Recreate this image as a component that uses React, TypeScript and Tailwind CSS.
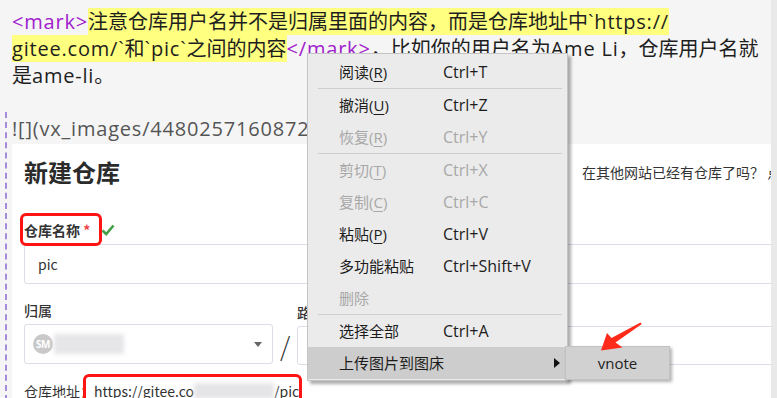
import React from "react";

const F = "font-['Open_Sans','Noto_Sans_CJK_SC',sans-serif]";

type Item = {
  label: React.ReactNode;
  sc?: string;
  dis?: boolean;
  sep?: boolean;
  hl?: boolean;
  arrow?: boolean;
};

function Acc({ t, k }: { t: string; k: string }) {
  return (
    <span>
      {t}(<span className="underline underline-offset-[3px]">{k}</span>)
    </span>
  );
}

function L({ children, className = "" }: { children: React.ReactNode; className?: string }) {
  return <span className={`tracking-[0.8px] ${className}`}>{children}</span>;
}

const items: Item[] = [
  { label: <Acc t="阅读" k="R" />, sc: "Ctrl+T" },
  { sep: true, label: null },
  { label: <Acc t="撤消" k="U" />, sc: "Ctrl+Z" },
  { label: <Acc t="恢复" k="R" />, sc: "Ctrl+Y", dis: true },
  { sep: true, label: null },
  { label: <Acc t="剪切" k="T" />, sc: "Ctrl+X", dis: true },
  { label: <Acc t="复制" k="C" />, sc: "Ctrl+C", dis: true },
  { label: <Acc t="粘贴" k="P" />, sc: "Ctrl+V" },
  { label: "多功能粘贴", sc: "Ctrl+Shift+V" },
  { label: "删除", dis: true },
  { sep: true, label: null },
  { label: "选择全部", sc: "Ctrl+A" },
  { label: "上传图片到图床", hl: true, arrow: true },
];

function ContextMenu() {
  return (
    <div
      className={`absolute left-[307px] top-[53px] w-[261px] h-[328px] bg-[#ebebeb] border border-[#c4c4c4] shadow-[3px_3px_3px_rgba(0,0,0,0.32)] pt-[2px] text-[15px] ${F}`}
    >
      {items.map((it, i) =>
        it.sep ? (
          <div key={i} className="h-px bg-[#cfcfcf] ml-[10px] mr-[5px]" />
        ) : (
          <div
            key={i}
            className={`h-[32px] flex items-center pl-[31px] ${it.hl ? "bg-[#cdcdcd]" : ""} ${
              it.dis ? "text-[#a8a8a8]" : "text-[#1c1c1c]"
            }`}
          >
            <span className="w-[104px] shrink-0 whitespace-nowrap">{it.label}</span>
            {it.sc && <span className="whitespace-nowrap text-[16px]">{it.sc}</span>}
            {it.arrow && (
              <svg className="ml-auto mr-[7px]" width="6" height="10" viewBox="0 0 6 10">
                <path d="M0 0 L6 5 L0 10 Z" fill="#111" />
              </svg>
            )}
          </div>
        )
      )}
    </div>
  );
}

function GiteeShot() {
  return (
    <div className="mt-[2px] bg-white flex-1 overflow-hidden text-[#333] font-['Noto_Sans_CJK_SC','Open_Sans',sans-serif]">
      <div className="w-[900px] pl-[12px] pt-[12px]">
        {/* title row */}
        <div className="flex items-center h-[32px]">
          <div className="w-[558px] text-[24px] font-bold leading-[32px] text-[#2b2b2b]">新建仓库</div>
          <div className="text-[14px] leading-[20px] whitespace-nowrap">在其他网站已经有仓库了吗？ 点此导入</div>
        </div>

        {/* repo name label */}
        <div className="mt-[32px] h-[20px] flex items-center text-[14px] leading-[20px]">
          <span className="relative font-bold">
            仓库名称 <span className="text-[#e44]">*</span>
            <span className="absolute -left-[4px] -top-[7px] w-[82px] h-[33px] border-[3px] border-[#ff1414] rounded-[6px]" />
          </span>
          <svg className="ml-[11px]" width="14" height="12" viewBox="0 0 14 12">
            <path d="M1.5 6.5 L5.2 10 L12.5 1.5" fill="none" stroke="#43a047" strokeWidth="2.6" />
          </svg>
        </div>
        <div className="mt-[4px] h-[40px] border border-[#dcdde6] rounded-[3px] flex items-center pl-[13px] text-[14px]">
          pic
        </div>

        {/* owner / path */}
        <div className="mt-[16px] flex items-start">
          <div className="w-[249px]">
            <div className="h-[20px] text-[14px] leading-[20px] font-medium">归属</div>
            <div className="mt-[4px] h-[40px] border border-[#dcdde6] rounded-[3px] flex items-center pl-[8px] pr-[10px]">
              <div className="w-[20px] h-[20px] rounded-full bg-[#c9c9c9] text-white text-[10px] font-bold tracking-[-0.5px] flex items-center justify-center font-['Open_Sans',sans-serif]">
                SM
              </div>
              <div className="ml-[1px] w-[70px] h-[20px] bg-[#e6e6e9] blur-[2px]" />
              <svg className="ml-auto" width="8" height="5" viewBox="0 0 8 5">
                <path d="M0 0 L8 0 L4 5 Z" fill="#666" />
              </svg>
            </div>
          </div>
          <div className="w-[24px] mt-[24px] h-[40px] flex items-center justify-center text-[26px] font-light text-[#333]">
            /
          </div>
          <div className="flex-1 mt-[2px]">
            <div className="h-[20px] text-[14px] leading-[20px] font-medium">路径</div>
            <div className="mt-[4px] h-[39px] border border-[#dcdde6] rounded-[3px]" />
          </div>
        </div>

        {/* address */}
        <div className="mt-[16px] h-[20px] flex items-center text-[14px] leading-[20px] whitespace-nowrap">
          <span className="shrink-0">仓库地址：</span>
          <span className="relative flex items-center">
            <span className="absolute -left-[11px] -top-[7px] w-[219px] h-[40px] border-[3px] border-[#ff1414] rounded-[6px]" />
            https://gitee.co
            <span className="inline-block w-[80px] h-[16px] bg-[#e5e5e8] blur-[2px]" />
            /pic
          </span>
        </div>
      </div>
    </div>
  );
}

export default function App() {
  return (
    <div className={`relative w-[777px] h-[398px] overflow-hidden bg-[#f5f5f5] flex ${F}`}>
      <div className="w-[771px] h-full flex flex-col">
        <div className="pt-[8px] pl-[12px] text-[20px] leading-[27px] text-[#1e1e1e] whitespace-nowrap">
          <div className="h-[27px]">
            <L className="text-[#a021cc]">&lt;mark&gt;</L>
            <span className="bg-[#ffff80]">
              注意仓库用户名并不是归属里面的内容，而是仓库地址中<L>`https://</L>
            </span>
          </div>
          <div className="h-[27px]">
            <span className="bg-[#ffff80]">
              <L>gitee.com/`</L>和<L>`pic`</L>之间的内容
            </span>
            <L className="text-[#a021cc]">&lt;/mark&gt;</L>
            <span>
              ，比如你的用户名为<L>Ame Li</L>，仓库用户名就
            </span>
          </div>
          <div className="h-[27px]">
            是<L>ame-li</L>。
          </div>
        </div>

        <div className="mt-[23px] ml-[5px] flex-1 flex flex-col border-l-2 border-dashed border-[#a68bdb] pl-[5px] pt-[3px]">
          <div className="h-[27px] text-[20px] leading-[27px] text-[#555] whitespace-nowrap">
            <L>![](vx_images/4480257160872.png)</L>
          </div>
          <GiteeShot />
        </div>
      </div>
      <div className="w-[6px] h-full bg-[#e9e9e9]" />

      <ContextMenu />

      {/* submenu */}
      <div
        className={`absolute left-[565px] top-[346px] w-[105px] h-[34px] bg-[#d1d1d1] border border-[#c2c2c2] shadow-[2px_2px_3px_rgba(0,0,0,0.3)] flex items-center justify-center text-[15px] text-[#222] ${F}`}
      >
        vnote
      </div>

      {/* red annotation arrow */}
      <svg className="absolute left-[595px] top-[318px]" width="52" height="38" viewBox="0 0 52 38">
        <path d="M6 32.5 L12 15 L16.5 20 L45.5 4.5 L46.8 6 L20.5 24.5 L27.5 29.5 Z" fill="#ff2a1a" />
      </svg>
    </div>
  );
}
